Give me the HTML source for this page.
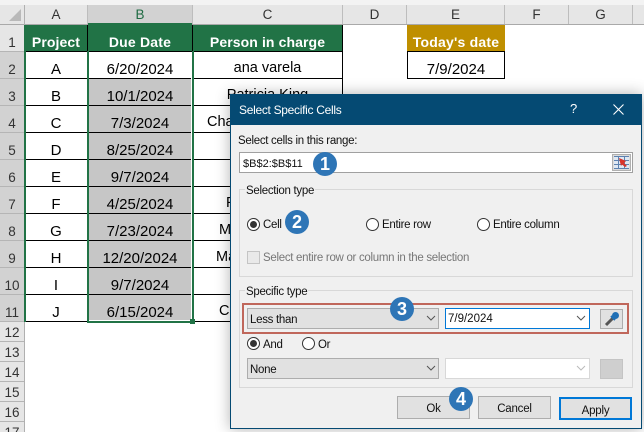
<!DOCTYPE html>
<html><head><meta charset="utf-8"><style>
html,body{margin:0;padding:0;background:#fff}
#p{position:relative;width:644px;height:432px;overflow:hidden;background:#fff;font-family:"Liberation Sans",sans-serif;color:#000}
#p div,#p span{position:absolute;box-sizing:border-box;white-space:nowrap}
.ch{top:5px;height:19px;background:#e6e6e6;border-right:1px solid #bdbdbd;text-align:center;font-size:13.5px;line-height:20px;color:#333}
.rh{left:0;width:24px;background:#e6e6e6;border-bottom:1px solid #b5b5b5;text-align:center;font-size:13.5px;color:#333;line-height:35px}
.rs{background:#d2d2d2}
.hl{height:1px;left:25px;width:317px;background:#000}
.gb{background:#c6c6c6;left:89px;width:102px;height:26px}
.c{font-size:15px;line-height:35px;height:27px;text-align:center}
.a{left:25px;width:62px}.b{left:88px;width:104px}.cc{left:193px;width:149px}
.p{font-size:14.5px;line-height:32px}
.h{top:25px;height:26px;line-height:34px;font-size:14px;font-weight:bold;color:#fff;text-align:center;letter-spacing:.1px}
.t{font-size:11.5px;line-height:14px;color:#111;letter-spacing:-.3px}
.g{color:#777}
.box{border:1px solid #d8d8d8}
.leg{background:#f0f0f0;padding:0 1px}
.rad{width:13px;height:13px;border-radius:50%;border:1px solid #333;background:#fff}
.rad i{position:absolute;left:2px;top:2px;width:7px;height:7px;border-radius:50%;background:#333}
.cb{background:#e1e1e1;border:1px solid #adadad;height:21px;left:247px;width:192px}
.in{background:#fff;left:445px;width:145px;height:21px}
.btn{background:#e1e1e1;border:1px solid #adadad;text-align:center;font-size:11.5px;line-height:24px;color:#111;width:73px;height:23px;top:396px;letter-spacing:-.2px}
.bd{width:24px;height:24px;border-radius:50%;background:#2e75b6;color:#fff;font-weight:bold;font-size:18px;line-height:24px;text-align:center}
</style></head><body><div id="p">
<div style="left:0;top:0;width:644px;height:5px;background:#f3f3f3"></div>
<div style="left:0;top:5px;width:24px;height:19px;background:#e6e6e6"></div>
<svg style="position:absolute;left:8px;top:8px" width="14" height="14"><path d="M13 1V13H1Z" fill="#b9b9b9"/></svg>
<div class="ch" style="left:25px;width:63px">A</div>
<div class="ch" style="left:88px;width:105px;background:#d2d2d2;color:#1f6b43">B</div>
<div class="ch" style="left:193px;width:150px">C</div>
<div class="ch" style="left:343px;width:64px">D</div>
<div class="ch" style="left:407px;width:98px">E</div>
<div class="ch" style="left:505px;width:64px">F</div>
<div class="ch" style="left:569px;width:64px">G</div>
<div class="ch" style="left:633px;width:11px;border-right:0"></div>
<div style="left:0;top:24px;width:644px;height:1px;background:#a9a9a9"></div>
<div style="left:24px;top:5px;width:1px;height:427px;background:#b0b0b0"></div>

<div class="rh" style="top:25px;height:27px">1</div>
<div class="rh rs" style="top:52px;height:27px">2</div>
<div class="rh rs" style="top:79px;height:27px">3</div>
<div class="rh rs" style="top:106px;height:27px">4</div>
<div class="rh rs" style="top:133px;height:27px">5</div>
<div class="rh rs" style="top:160px;height:27px">6</div>
<div class="rh rs" style="top:187px;height:27px">7</div>
<div class="rh rs" style="top:214px;height:27px">8</div>
<div class="rh rs" style="top:241px;height:27px">9</div>
<div class="rh rs" style="top:268px;height:27px">10</div>
<div class="rh rs" style="top:295px;height:27px">11</div>
<div class="rh" style="top:322px;height:20px;line-height:21px">12</div>
<div class="rh" style="top:342px;height:20px;line-height:21px">13</div>
<div class="rh" style="top:362px;height:20px;line-height:21px">14</div>
<div class="rh" style="top:382px;height:20px;line-height:21px">15</div>
<div class="rh" style="top:402px;height:20px;line-height:21px">16</div>
<div class="rh" style="top:422px;height:20px;line-height:21px">17</div>

<div style="left:25px;top:25px;width:317px;height:26px;background:#217346"></div>
<div style="left:88px;top:23px;width:104px;height:3px;background:#217346"></div>
<div style="left:87px;top:25px;width:1px;height:26px;background:#000"></div>
<div style="left:192px;top:25px;width:1px;height:26px;background:#000"></div>
<div class="h" style="left:25px;width:62px">Project</div>
<div class="h" style="left:88px;width:104px;letter-spacing:.2px">Due Date</div>
<div class="h" style="left:193px;width:149px;letter-spacing:.1px">Person in charge</div>

<div class="gb" style="top:79px"></div><div class="gb" style="top:106px"></div><div class="gb" style="top:133px"></div><div class="gb" style="top:160px"></div><div class="gb" style="top:187px"></div><div class="gb" style="top:214px"></div><div class="gb" style="top:241px"></div><div class="gb" style="top:268px"></div><div class="gb" style="top:295px;height:25px"></div>

<div class="hl" style="top:51px"></div><div class="hl" style="top:78px"></div><div class="hl" style="top:105px"></div><div class="hl" style="top:132px"></div><div class="hl" style="top:159px"></div><div class="hl" style="top:186px"></div><div class="hl" style="top:213px"></div><div class="hl" style="top:240px"></div><div class="hl" style="top:267px"></div><div class="hl" style="top:294px"></div><div class="hl" style="top:321px"></div>
<div style="left:342px;top:25px;width:1px;height:297px;background:#000"></div>
<div style="left:24px;top:25px;width:1.5px;height:297px;background:#217346"></div>
<div style="left:191px;top:52px;width:1px;height:269px;background:#fff"></div>
<div style="left:87px;top:51px;width:2px;height:272px;background:#217346"></div>
<div style="left:192px;top:51px;width:2px;height:272px;background:#217346"></div>
<div style="left:87px;top:321px;width:107px;height:2px;background:#217346"></div>
<div style="left:89px;top:320px;width:102px;height:1px;background:#fff"></div>
<div style="left:190px;top:319px;width:5px;height:5px;background:#217346"></div>

<div class="c a" style="top:52px">A</div><div class="c a" style="top:79px">B</div><div class="c a" style="top:106px">C</div><div class="c a" style="top:133px">D</div><div class="c a" style="top:160px">E</div><div class="c a" style="top:187px">F</div><div class="c a" style="top:214px">G</div><div class="c a" style="top:241px">H</div><div class="c a" style="top:268px">I</div><div class="c a" style="top:295px">J</div>
<div class="c b" style="top:52px">6/20/2024</div><div class="c b" style="top:79px">10/1/2024</div><div class="c b" style="top:106px">7/3/2024</div><div class="c b" style="top:133px">8/25/2024</div><div class="c b" style="top:160px">9/7/2024</div><div class="c b" style="top:187px">4/25/2024</div><div class="c b" style="top:214px">7/23/2024</div><div class="c b" style="top:241px">12/20/2024</div><div class="c b" style="top:268px">9/7/2024</div><div class="c b" style="top:295px">6/15/2024</div>
<div class="c cc p" style="top:52px">ana varela</div>
<div class="c cc p" style="top:79px">Patricia King</div>
<div class="c p" style="left:207px;top:106px">Charlotte Evans</div>
<div class="c p" style="left:229px;top:133px">Ian</div>
<div class="c p" style="left:226px;top:187px">Frank</div>
<div class="c p" style="left:219px;top:214px">Mary Hall</div>
<div class="c p" style="left:216px;top:241px">Martin Ross</div>
<div class="c p" style="left:219px;top:295px">Claire Wood</div>

<div style="left:407px;top:25px;width:98px;height:26px;background:#bf8f00"></div>
<div class="h" style="left:407px;width:98px;letter-spacing:.2px">Today's date</div>
<div style="left:407px;top:51px;width:98px;height:28px;border:1px solid #000"></div>
<div class="c" style="left:407px;width:98px;top:52px">7/9/2024</div>

<div style="left:230px;top:94px;width:412px;height:335px;background:#f0f0f0;border:1px solid #054a73;box-shadow:0 0 14px rgba(0,0,0,.3)"></div>
<div style="left:230px;top:94px;width:412px;height:31px;background:#054a73"></div>
<div class="t" style="left:239px;top:103px;color:#fff;font-size:12px">Select Specific Cells</div>
<div class="t" style="left:570px;top:102px;color:#fff;font-size:13px">?</div>
<svg style="position:absolute;left:612px;top:103px" width="13" height="13"><path d="M1.500 1.500L11.500 11.500M11.500 1.500L1.500 11.500" stroke="#fff" stroke-width="1.100" fill="none"/></svg>

<div class="t" style="left:238px;top:134px">Select cells in this range:</div>
<div style="left:239px;top:152px;width:394px;height:21px;background:#fff;border:1px solid #a0a0a0"></div>
<div class="t" style="left:243px;top:157px;font-size:11px;letter-spacing:0">$B$2:$B$11</div>
<div style="left:612px;top:154px;width:19px;height:17px;background:#dcdcdc;border:1px solid #b0b0b0"></div>
<svg style="position:absolute;left:614px;top:156px" width="15" height="13"><rect x="0" y="0" width="15" height="13" fill="#dfe8f3"/><path d="M0 .5H15M0 4.500H15M0 8.500H15M0 12.500H15M4.500 0V13M10.500 0V13" stroke="#5d82b0" stroke-width="1"/><path d="M5 2L12 5L10 7L13 10L11 11L8 8.500L7 10Z" fill="#d9342b"/></svg>

<div class="box" style="left:239px;top:189px;width:394px;height:88px"></div>
<div class="t leg" style="left:245px;top:184px">Selection type</div>
<div class="rad" style="left:247px;top:218px"><i></i></div><div class="t" style="left:263px;top:218px">Cell</div>
<div class="rad" style="left:366px;top:218px"></div><div class="t" style="left:382px;top:218px">Entire row</div>
<div class="rad" style="left:477px;top:218px"></div><div class="t" style="left:493px;top:218px">Entire column</div>
<div style="left:247px;top:251px;width:13px;height:13px;background:#e9e9e9;border:1px solid #c4c4c4"></div>
<div class="t g" style="left:263px;top:251px">Select entire row or column in the selection</div>

<div class="box" style="left:239px;top:290px;width:394px;height:98px"></div>
<div class="t leg" style="left:245px;top:285px">Specific type</div>
<div style="left:242px;top:303px;width:387px;height:31px;border:2px solid #c0675b"></div>
<div class="cb" style="top:308px"></div>
<div class="t" style="left:250px;top:313px">Less than</div>
<svg style="position:absolute;left:426px;top:315px" width="10" height="7"><path d="M1 1L5 5L9 1" stroke="#555" fill="none"/></svg>
<div class="in" style="top:308px;border:1px solid #0078d7"></div>
<div class="t" style="left:448px;top:312px;letter-spacing:0">7/9/2024</div>
<svg style="position:absolute;left:576px;top:315px" width="10" height="7"><path d="M1 1L5 5L9 1" stroke="#555" fill="none"/></svg>
<div style="left:600px;top:309px;width:23px;height:20px;background:#e1e1e1;border:1px solid #adadad"></div>
<svg style="position:absolute;left:604px;top:311px" width="16" height="16"><path d="M2 14L9 7" stroke="#555" stroke-width="3" fill="none"/><circle cx="11.500" cy="4.500" r="3.500" fill="#1f6fb5"/><path d="M7 5L11 9" stroke="#1f6fb5" stroke-width="2"/></svg>

<div class="rad" style="left:247px;top:337px"><i></i></div><div class="t" style="left:263px;top:338px">And</div>
<div class="rad" style="left:302px;top:337px"></div><div class="t" style="left:318px;top:338px">Or</div>

<div class="cb" style="top:358px"></div>
<div class="t" style="left:250px;top:363px">None</div>
<svg style="position:absolute;left:426px;top:365px" width="10" height="7"><path d="M1 1L5 5L9 1" stroke="#555" fill="none"/></svg>
<div class="in" style="top:358px;border:1px solid #d8d8d8"></div>
<svg style="position:absolute;left:576px;top:365px" width="10" height="7"><path d="M1 1L5 5L9 1" stroke="#bbb" fill="none"/></svg>
<div style="left:600px;top:359px;width:23px;height:20px;background:#cfcfcf;border:1px solid #c4c4c4"></div>

<div class="btn" style="left:397px">Ok</div>
<div class="btn" style="left:478px">Cancel</div>
<div class="btn" style="left:559px;top:397px;height:23px;border:2px solid #0078d7">Apply</div>

<div class="bd" style="left:313px;top:152px">1</div>
<div class="bd" style="left:285px;top:210px">2</div>
<div class="bd" style="left:390px;top:297px">3</div>
<div class="bd" style="left:449px;top:387px">4</div>
</div></body></html>
